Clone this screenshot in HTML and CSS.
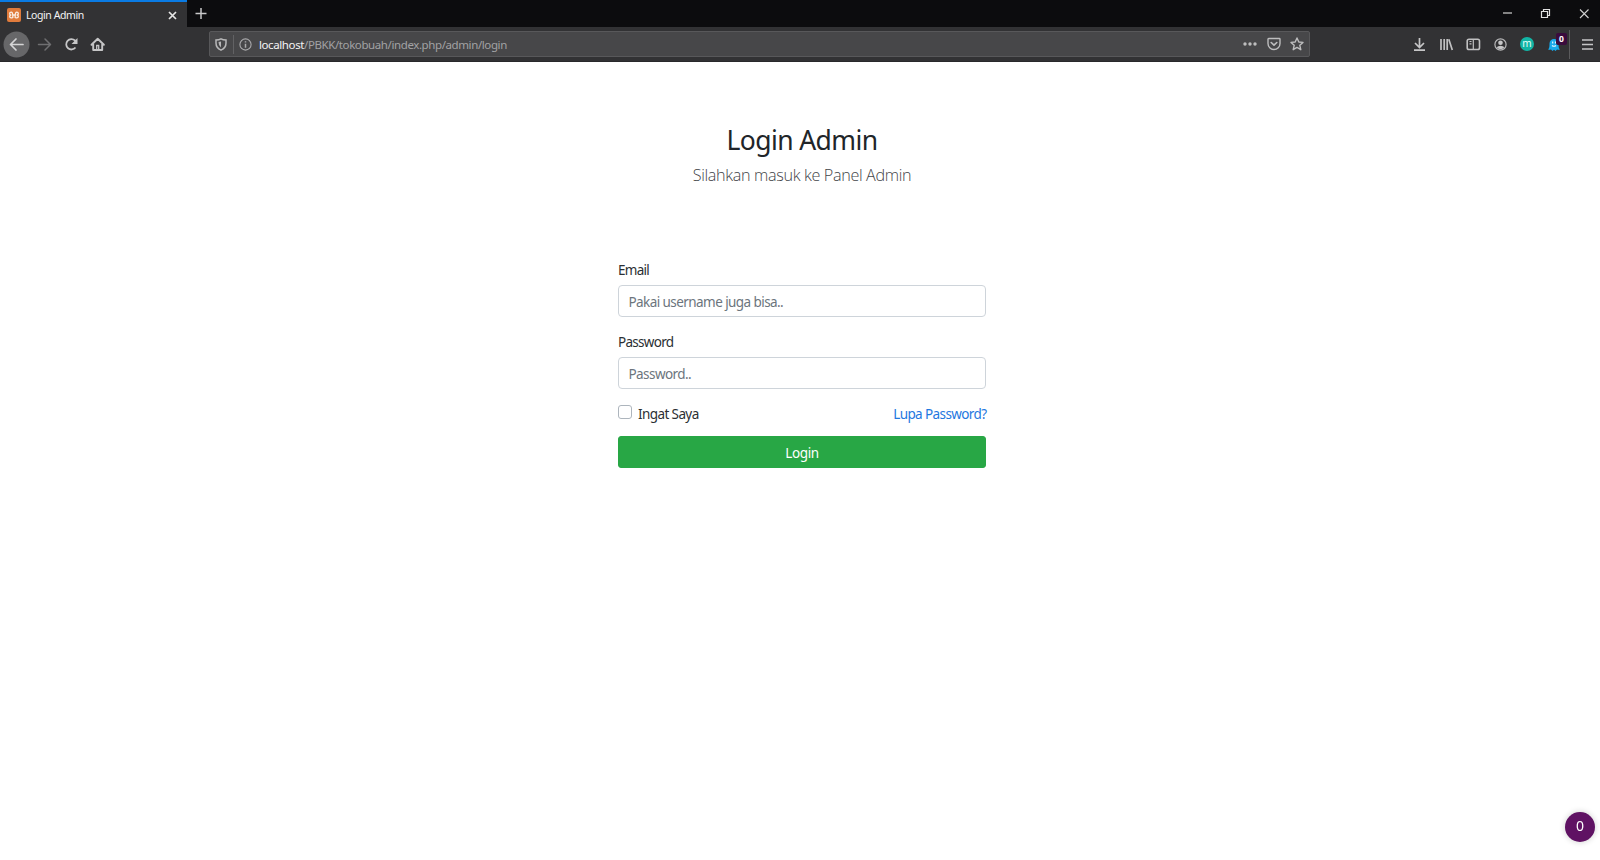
FILE: index.html
```html
<!DOCTYPE html>
<html lang="id">
<head>
<meta charset="utf-8">
<title>Login Admin</title>
<link rel="stylesheet" href="styles.css">
</head>
<body>
<header class="chrome">
  <div class="tabs">
    <div class="tab">
      <svg class="favicon" width="14" height="14" viewBox="0 0 14 14"><rect width="14" height="14" rx="2" fill="#e07b3c"/><path d="M5.600 9.900H4.200Q2.700 9.900 2.700 8.600Q2.700 7 3.900 7Q2.700 7 2.700 5.400Q2.700 4.100 4.200 4.100Q5.500 4.100 5.800 7H8.200Q8.500 4.100 9.800 4.100Q11.300 4.100 11.300 5.400Q11.300 7 10.100 7Q11.300 7 11.300 8.600Q11.300 9.900 9.800 9.900H8.400M5.800 7V9.900M8.200 7V9.900" fill="none" stroke="#fbeee5" stroke-width="1.300" stroke-linejoin="round"/></svg>
      <span class="tab-title">Login Admin</span>
      <svg class="tab-close" width="9" height="9" viewBox="0 0 9 9"><path d="M1 1L8 8M8 1L1 8" stroke="#e6e6e6" stroke-width="1.700"/></svg>
    </div>
    <svg class="newtab" width="28" height="27" viewBox="0 0 28 27"><path d="M8.500 13.500H19.500M14 8V19" stroke="#c8c8c9" stroke-width="1.500"/></svg>
    <div class="window-buttons">
      <svg width="39" height="27" viewBox="0 0 39 27"><path d="M15 13H24" stroke="#c4c4c4" stroke-width="1.300"/></svg>
      <svg width="38" height="27" viewBox="0 0 38 27"><path d="M14.500 11.500H20.500V17.500H14.500ZM16.500 11V9.500H22.500V15.500H21" fill="none" stroke="#e0e0e0" stroke-width="1.200"/></svg>
      <svg width="38" height="27" viewBox="0 0 38 27"><path d="M15 9.500L23.500 18M23.500 9.500L15 18" stroke="#d0d0d0" stroke-width="1.100"/></svg>
    </div>
  </div>
  <nav class="toolbar">
    <svg class="tool" viewBox="0 0 27 27"><circle cx="13.500" cy="13.500" r="13" fill="#676769"/><path d="M20 13.500H7.500M13 8L7.500 13.500L13 19" fill="none" stroke="#d5d5d6" stroke-width="1.700" stroke-linecap="round" stroke-linejoin="round"/></svg>
    <svg class="tool" viewBox="0 0 27 27"><path d="M8.500 13.500H20.500M15 8L20.500 13.500L15 19" fill="none" stroke="#6f6f71" stroke-width="1.500" stroke-linecap="round" stroke-linejoin="round"/></svg>
    <svg class="tool" viewBox="0 0 27 27"><path d="M18.500 16.500A5.200 5.200 0 1 1 18 9.500L19 10.500" fill="none" stroke="#c6c6c7" stroke-width="1.800"/><path d="M20.500 7V13H14.500Z" fill="#c6c6c7"/></svg>
    <svg class="tool" viewBox="0 0 27 27"><path d="M7.500 13.800L13.700 7.700L19.900 13.800M9.200 13V19H18.200V13" fill="none" stroke="#c6c6c7" stroke-width="1.900" stroke-linecap="round" stroke-linejoin="round"/><path d="M12.700 19V14.500H14.700V19" fill="none" stroke="#c6c6c7" stroke-width="1.300"/></svg>
    <div class="urlbar">
      <svg class="shield" width="12" height="13" viewBox="0 0 12 13"><path d="M1 2.100Q4 2 6 .9Q8 2 11 2.100V5Q11 10 6 12.100Q1 10 1 5Z" fill="none" stroke="#b8b8b9" stroke-width="1.500"/><path d="M6 3.400V9.600Q3.500 8 3.500 4Z" fill="#b8b8b9"/></svg>
      <span class="url-divider"></span>
      <svg class="info" width="13" height="13" viewBox="0 0 13 13"><circle cx="6.500" cy="6.500" r="5.600" fill="none" stroke="#aaaaac" stroke-width="1.100"/><path d="M6.500 5.800V9.700M6.500 3.200V4.600" stroke="#aaaaac" stroke-width="1.500"/></svg>
      <span class="url"><span class="host">localhost</span>/PBKK/tokobuah/index.php/admin/login</span>
      <span class="url-actions">
        <svg width="14" height="14" viewBox="0 0 14 14" fill="#bdbdbe"><circle cx="2" cy="7" r="1.700"/><circle cx="7" cy="7" r="1.700"/><circle cx="12" cy="7" r="1.700"/></svg>
        <svg width="14" height="14" viewBox="0 0 14 14" fill="none" stroke="#bdbdbe" stroke-width="1.400" stroke-linejoin="round"><path d="M1.700 1.500H12.300Q13 1.500 13 2.200V6.500A6 6 0 0 1 1 6.500V2.200Q1 1.500 1.700 1.500Z"/><path d="M4.200 5.500L7 8.200L9.800 5.500" stroke-width="1.600" stroke-linecap="round"/></svg>
        <svg width="14" height="14" viewBox="0 0 14 14"><path d="M7 1L8.800 5L13 5.400L9.800 8.300L10.800 12.700L7 10.400L3.200 12.700L4.200 8.300L1 5.400L5.200 5Z" fill="none" stroke="#bdbdbe" stroke-width="1.400" stroke-linejoin="round"/></svg>
      </span>
    </div>
    <div class="extensions">
      <svg class="tool" viewBox="0 0 27 27"><path d="M13.500 7V16M9 12L13.500 16.500L18 12M8 19.200H19" fill="none" stroke="#c6c6c7" stroke-width="1.700"/></svg>
      <svg class="tool" viewBox="0 0 27 27"><path d="M8 8V19M11.200 8V19M14.200 8V19M15.800 8.300L19.300 19" fill="none" stroke="#c0c0c1" stroke-width="1.700"/></svg>
      <svg class="tool" viewBox="0 0 27 27"><rect x="7.200" y="8.200" width="12.300" height="10.300" rx="1.800" fill="none" stroke="#c0c0c1" stroke-width="1.600"/><path d="M13.300 8V19M9.500 10.500H11.500M9.500 12.800H11.500" stroke="#c0c0c1" stroke-width="1.200"/></svg>
      <svg class="tool" viewBox="0 0 27 27"><circle cx="13.500" cy="13.500" r="5.600" fill="none" stroke="#b8b8b9" stroke-width="1.200"/><circle cx="13.500" cy="11.800" r="2.300" fill="#c6c6c7"/><path d="M9.600 16.300Q11 14.800 13.500 14.800Q16 14.800 17.400 16.300Q15.800 18.300 13.500 18.300Q11.200 18.300 9.600 16.300Z" fill="#c6c6c7"/></svg>
      <span class="monogram">m</span>
      <span class="ghost">
        <svg class="tool" viewBox="0 0 27 27"><path d="M7.500 19V18Q8.500 17 8.500 12.500A4.500 4.500 0 0 1 17.500 12.500Q17.500 17 18.500 18V19L16 18.500L14.500 20L13 18.700L11.500 20L10 18.500Z" fill="#18a9ea"/><path d="M11.700 10.500V12.500M14.500 10.500V12.500M11 14.500Q13 16 15 14.500" fill="none" stroke="#e4f6ff" stroke-width="1.200"/></svg>
        <span class="count">0</span>
      </span>
    </div>
    <span class="tool-divider"></span>
    <svg class="menu" viewBox="0 0 27 27"><path d="M8 9H19M8 13.500H19M8 18H19" stroke="#c6c6c7" stroke-width="1.600"/></svg>
  </nav>
</header>
<main class="page">
  <h1 class="title">Login Admin</h1>
  <p class="lead">Silahkan masuk ke Panel Admin</p>
  <form class="form">
    <label class="label" for="email">Email</label>
    <input class="field" id="email" type="text" placeholder="Pakai username juga bisa..">
    <label class="label" for="password">Password</label>
    <input class="field" id="password" type="password" placeholder="Password..">
    <div class="options">
      <label class="remember"><input class="check" type="checkbox"><span>Ingat Saya</span></label>
      <a class="forgot" href="#">Lupa Password?</a>
    </div>
    <button class="submit" type="button">Login</button>
  </form>
</main>
<div class="tracker">0</div>
</body>
</html>
```
FILE: styles.css
```css
* { box-sizing: border-box; }
body { margin: 0; height: 860px; overflow: hidden; background: #fff; color: #2b2f33; font-family: "Noto Sans", "Open Sans", sans-serif; font-size: 13.5px; }
svg { display: block; flex: none; }
.chrome { height: 62px; background: #323234; border-bottom: 1px solid #29292b; }
.tabs { display: flex; height: 27px; background: #0c0c0e; }
.tab { display: flex; align-items: center; width: 187px; height: 27px; padding: 1px 10px 0 7px; border-top: 2px solid #0a7be4; background: #323234; }
.tab-title { margin: 0 auto 0 5px; padding-bottom: 1px; color: #f2f2f3; font-size: 10.5px; letter-spacing: -.42px; line-height: 14px; }
.newtab { width: 28px; }
.window-buttons { display: flex; margin-left: auto; margin-right: -3px; }
.toolbar { display: flex; align-items: center; height: 34px; padding-left: 3px; }
.tool { width: 27px; height: 27px; flex: none; }
.urlbar { display: flex; flex: none; align-items: center; width: 1101px; height: 26px; margin-left: 98px; padding: 0 5px; border: 1px solid #58585a; border-radius: 2px; background: #474749; }
.url-divider { width: 1px; height: 19px; margin: 0 5px 0 6px; background: #626264; }
.url { margin-left: 7px; padding-top: 2px; color: #a2a2a4; font-size: 11.5px; letter-spacing: -.4px; line-height: 16px; white-space: nowrap; }
.host { color: #f4f4f5; }
.url-actions { display: flex; gap: 9.500px; margin-left: auto; }
.extensions { display: flex; flex: none; align-items: center; margin-left: 96px; }
.monogram { width: 14px; height: 14px; margin: 0 7px 0 6px; border-radius: 50%; background: #12b5a5; color: #e5fffb; font-size: 10px; line-height: 12px; text-align: center; }
.ghost { position: relative; }
.count { position: absolute; left: 15px; top: 2px; width: 11px; height: 12px; border-radius: 2px; background: #3a0b3d; color: #fff; font-size: 8.500px; font-weight: 700; line-height: 11px; text-align: center; }
.tool-divider { flex: none; width: 1px; height: 29px; margin-left: 1px; background: #5b5b5d; }
.menu { width: 27px; height: 27px; margin-left: 4px; }
.page { width: 368px; margin-left: 618px; padding-top: 61px; }
.title { margin: 0; color: #212529; font-size: 26.5px; font-weight: 400; line-height: 34px; letter-spacing: -.6px; text-align: center; white-space: nowrap; }
.lead { margin: 7px 0 0; color: #3f4448; font-family: "Open Sans", "Noto Sans", sans-serif; font-size: 16.2px; font-weight: 300; line-height: 22px; letter-spacing: -.35px; text-align: center; }
.form { display: flex; flex-direction: column; margin-top: 74px; }
.label { height: 25px; line-height: 20px; letter-spacing: -.72px; }
.field { width: 368px; height: 32px; margin: 0 0 15px; padding: 2px 10px 0 9.500px; border: 1px solid #ced4da; border-radius: 4px; outline: 0; background: #fff; font: inherit; letter-spacing: -.57px; }
.field::placeholder { color: #6c757d; opacity: 1; }
.options { display: flex; justify-content: space-between; height: 32px; line-height: 20px; letter-spacing: -.6px; }
.remember { display: flex; gap: 6px; }
.check { appearance: none; width: 14px; height: 14px; margin: 1px 0 0; border: 1px solid #adb5bd; border-radius: 3px; background: #fff; }
.forgot { margin-right: -.5px; color: #1f78e0; text-decoration: none; }
.submit { height: 32px; padding: 1px 0 0; border: 1px solid #28a745; border-radius: 3px; background: #28a745; color: #fff; font: inherit; letter-spacing: -.35px; }
.tracker { position: fixed; right: 5px; bottom: 18px; width: 30px; height: 30px; border-radius: 50%; background: #5f1263; box-shadow: 0 0 6px rgba(0, 0, 0, .2); color: #fff; font-size: 14px; line-height: 28px; text-align: center; }
```
